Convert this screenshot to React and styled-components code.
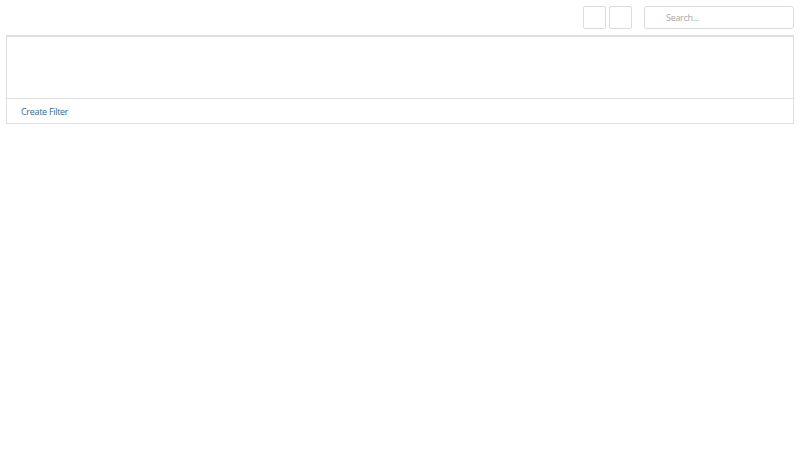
import styled, { createGlobalStyle } from 'styled-components';

const Global = createGlobalStyle`
  html, body { margin: 0; padding: 0; background: #fff; }
  body { font-family: "Open Sans", "Liberation Sans", sans-serif; color: #333; }
`

const Page = styled.div`
  padding: 6px 6px 0 6px;
`

const Toolbar = styled.div`
  display: flex;
  justify-content: flex-end;
  align-items: center;
  height: 23px;
  margin-bottom: 6px;
`

const IconButton = styled.button`
  width: 23px;
  height: 23px;
  padding: 0;
  margin-left: ${p => p.$first ? '0' : '3px'};
  background: #fff;
  border: 1px solid #dcdcdc;
  border-radius: 2px;
`

const Search = styled.input`
  box-sizing: border-box;
  width: 150px;
  height: 23px;
  margin-left: 12px;
  padding: 0 0 0 21px;
  border: 1px solid #dcdcdc;
  border-radius: 3px;
  font-family: "Open Sans", "Liberation Sans", sans-serif;
  font-size: 9px;
  letter-spacing: -0.3px;
  color: #555;
  outline: none;
  &::placeholder { color: #a8a8a8; }
`

const Panel = styled.div`
  border: 1px solid #e0e0e0;
  border-top: 2px solid #dedede;
`

const PanelBody = styled.div`
  height: 61px;
`

const PanelFooter = styled.div`
  display: flex;
  align-items: center;
  height: 24px;
  padding-left: 14px;
  border-top: 1px solid #e0e0e0;
`

const Link = styled.a`
  font-size: 9px;
  letter-spacing: -0.3px;
  color: #37678f;
  text-decoration: none;
  cursor: pointer;
`

export default function App() {
  return (
    <Page>
      <Global />
      <Toolbar>
        <IconButton $first />
        <IconButton />
        <Search placeholder="Search..." />
      </Toolbar>
      <Panel>
        <PanelBody />
        <PanelFooter>
          <Link>Create Filter</Link>
        </PanelFooter>
      </Panel>
    </Page>
  )
}
